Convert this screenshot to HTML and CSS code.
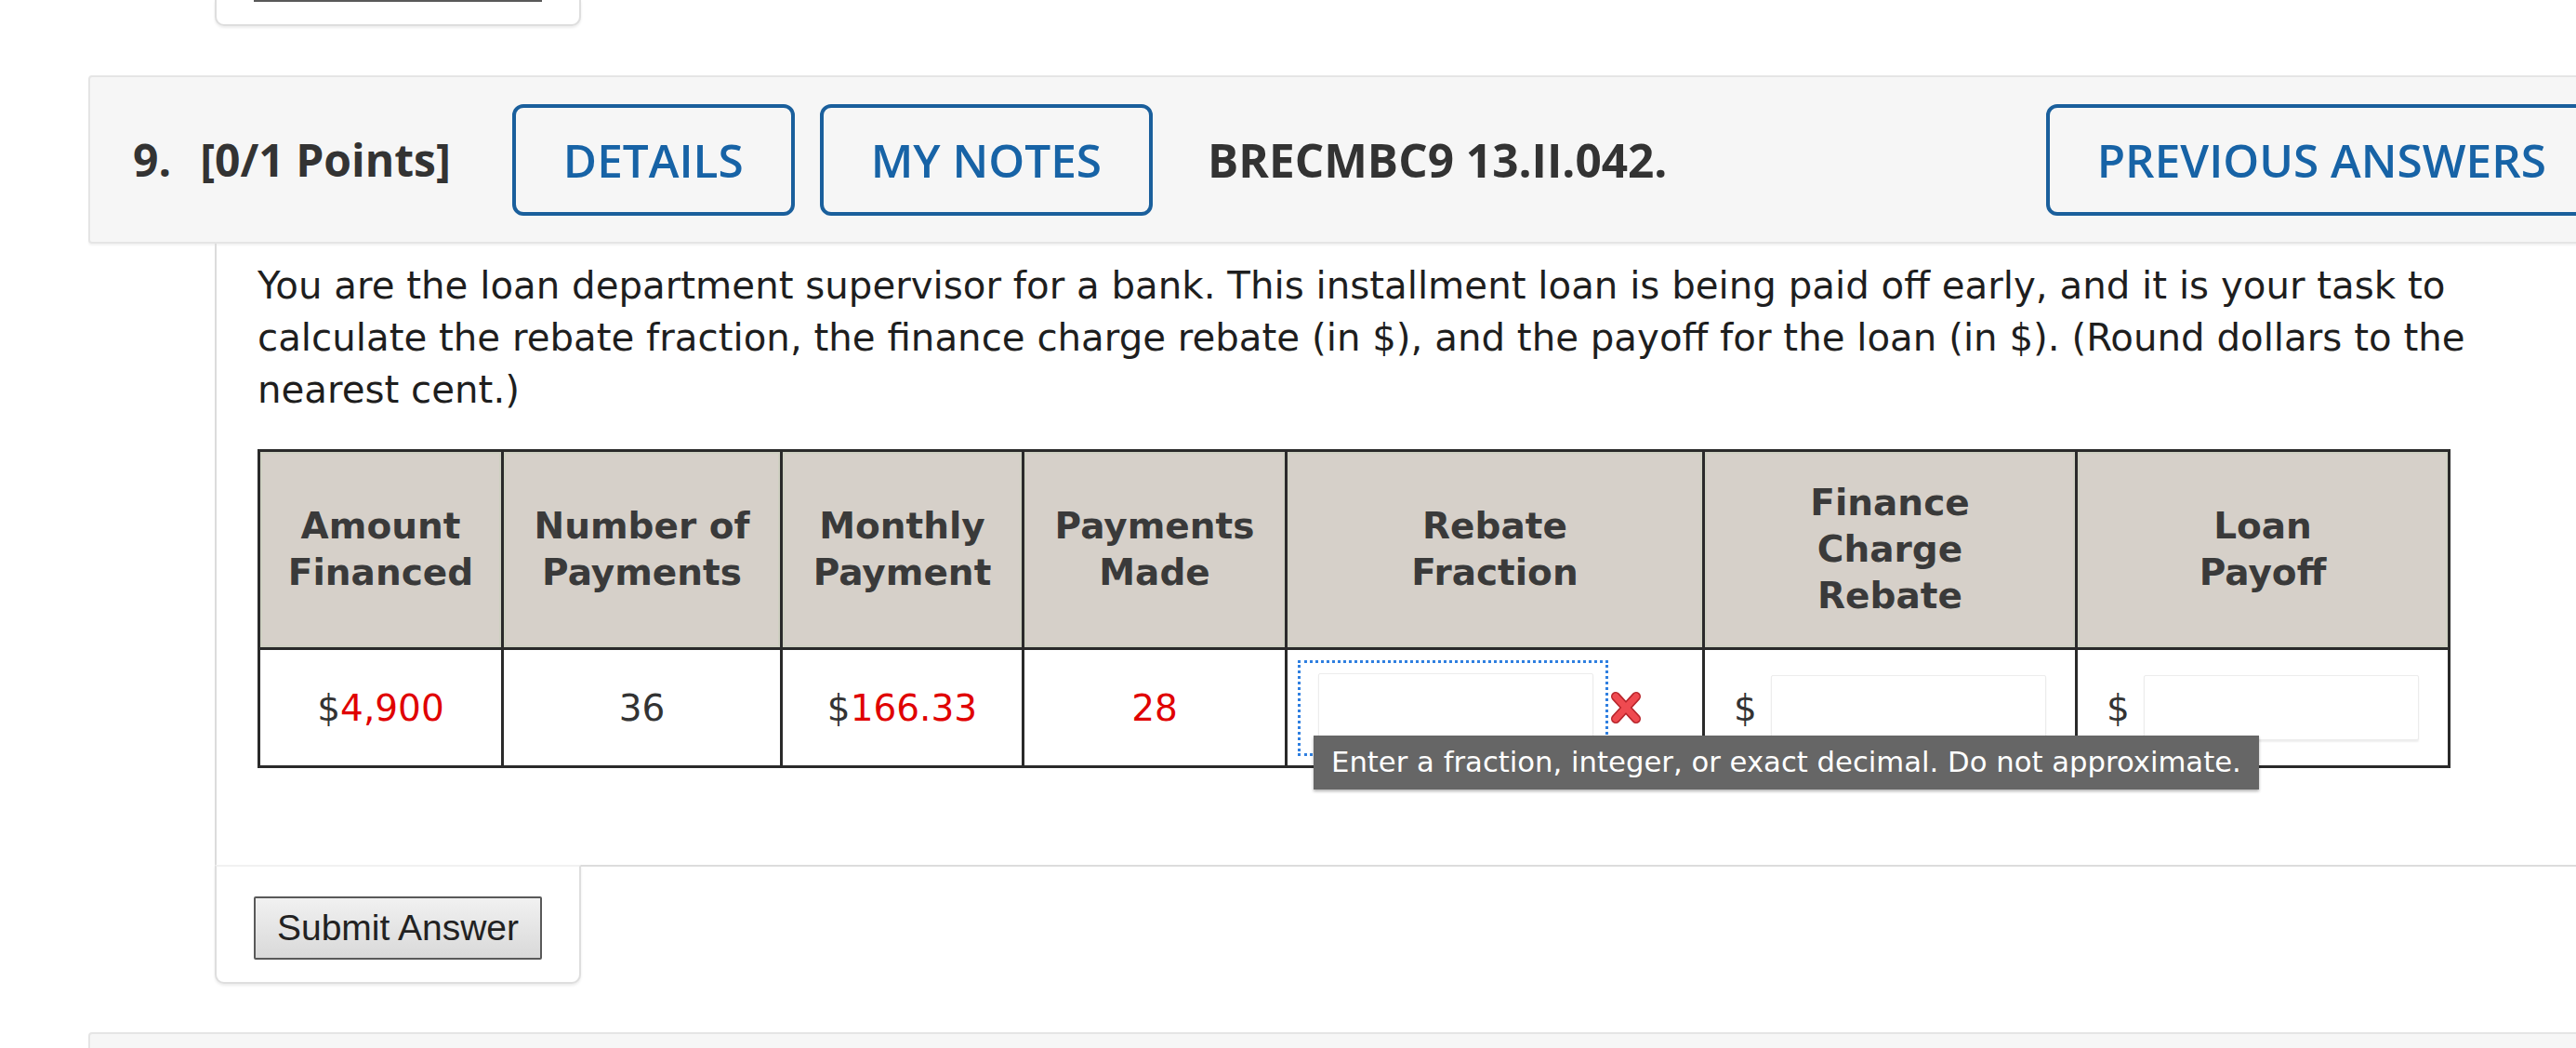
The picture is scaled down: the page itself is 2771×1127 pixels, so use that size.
FILE: index.html
```html
<!DOCTYPE html>
<html lang="en">
<head>
<meta charset="utf-8">
<title>Question 9</title>
<link rel="stylesheet" href="styles.css">
</head>
<body>
<div class="page">
  <div class="question prev">
    <div class="tab tab-prev"><span class="submit-stub"></span></div>
  </div>

  <div class="question current">
    <div class="qhead">
      <span class="qnum">9.</span>
      <span class="qpts">[0/1 Points]</span>
      <a class="qbtn details">DETAILS</a>
      <a class="qbtn notes">MY NOTES</a>
      <span class="qid">BRECMBC9 13.II.042.</span>
      <a class="qbtn prevans">PREVIOUS ANSWERS</a>
    </div>
    <div class="qbody">
      <p class="prompt">You are the loan department supervisor for a bank. This installment loan is being paid off early, and it is your task to calculate the rebate fraction, the finance charge rebate (in $), and the payoff for the loan (in $). (Round dollars to the nearest cent.)</p>
      <table class="loan">
        <colgroup>
          <col class="c-amount">
          <col class="c-number">
          <col class="c-monthly">
          <col class="c-made">
          <col class="c-fraction">
          <col class="c-rebate">
          <col class="c-payoff">
        </colgroup>
        <thead>
          <tr>
            <th>Amount<br>Financed</th>
            <th>Number of<br>Payments</th>
            <th>Monthly<br>Payment</th>
            <th>Payments<br>Made</th>
            <th>Rebate<br>Fraction</th>
            <th>Finance<br>Charge<br>Rebate</th>
            <th>Loan<br>Payoff</th>
          </tr>
        </thead>
        <tbody>
          <tr>
            <td>$<span class="given">4,900</span></td>
            <td>36</td>
            <td>$<span class="given">166.33</span></td>
            <td><span class="given">28</span></td>
            <td class="fraction-cell">
              <div class="answer-row">
                <span class="focus-ring">
                  <input class="answer" type="text" aria-label="Rebate Fraction">
                  <span class="tip">Enter a fraction, integer, or exact decimal. Do not approximate.</span>
                </span>
                <svg class="wrong" width="38" height="40" viewBox="0 0 38 40" aria-hidden="true">
                  <path d="M8 8 L30 32 M30 8 L8 32" stroke="#b8242b" stroke-width="10" stroke-linecap="round"/>
                  <path d="M8 8 L30 32 M30 8 L8 32" stroke="#ef4a50" stroke-width="7" stroke-linecap="round"/>
                </svg>
              </div>
            </td>
            <td>
              <div class="money"><span>$</span><input class="answer" type="text" aria-label="Finance Charge Rebate"></div>
            </td>
            <td>
              <div class="money"><span>$</span><input class="answer" type="text" aria-label="Loan Payoff"></div>
            </td>
          </tr>
        </tbody>
      </table>
    </div>
    <div class="tab"><button class="submit" type="button">Submit Answer</button></div>
  </div>

  <div class="question next">
    <div class="qhead"></div>
  </div>
</div>
</body>
</html>
```

FILE: styles.css
```css
html, body {
  margin: 0;
  padding: 0;
  background: #ffffff;
  overflow: hidden;
}

.page {
  width: 2900px;
}

.question {
  margin-left: 95px;
  width: 2741px;
}

.question.current {
  margin-top: 53px;
}

.question.next {
  margin-top: 52px;
}

/* header bar */
.qhead {
  box-sizing: border-box;
  height: 181px;
  display: flex;
  align-items: center;
  padding: 0 40px 0 46px;
  background: #f6f6f6;
  border: 2px solid #e5e5e5;
  border-radius: 4px;
  box-shadow: 0 2px 2px rgba(0, 0, 0, 0.05);
  font-family: "Open Sans", "Liberation Sans", sans-serif;
  font-size: 48px;
  font-weight: 700;
  color: #333333;
  white-space: nowrap;
}

.qnum {
  margin-right: 31px;
}

.qpts {
  margin-right: 66px;
}

.qid {
  font-size: 49.5px;
}

.qbtn {
  box-sizing: border-box;
  height: 120px;
  display: flex;
  align-items: center;
  padding: 0 51px;
  border: 4px solid #1a5f9c;
  border-radius: 12px;
  color: #1763a6;
  font-weight: 600;
  font-size: 49.5px;
}

.details {
  margin-right: 27px;
}

.notes {
  margin-right: 59px;
}

.prevans {
  margin-left: auto;
}

/* question body */
.qbody {
  margin-left: 136px;
  border-left: 2px solid #dcdcdc;
  border-bottom: 2px solid #dcdcdc;
  padding: 18px 44px 104px;
  font-family: "DejaVu Sans", Verdana, sans-serif;
  color: #1e1e1e;
}

.prompt {
  margin: 0;
  width: 2440px;
  font-size: 40.3px;
  line-height: 56px;
}

/* data table */
.loan {
  margin-top: 35px;
  border-collapse: collapse;
  table-layout: fixed;
  width: 2356px;
  font-size: 39px;
}

.c-amount { width: 262px; }
.c-number { width: 300px; }
.c-monthly { width: 260px; }
.c-made { width: 283px; }
.c-fraction { width: 449px; }
.c-rebate { width: 401px; }
.c-payoff { width: 401px; }

.loan th,
.loan td {
  border: 3px solid #2a2a2a;
  text-align: center;
  vertical-align: middle;
  padding: 0 6px;
}

.loan th {
  height: 210px;
  background: #d6d0c9;
  box-shadow: inset 0 0 0 2px #cfd0c2;
  color: #3a3a3a;
  font-weight: 700;
  line-height: 50px;
}

.loan td {
  height: 124px;
  background: #ffffff;
  color: #333333;
}

.given {
  color: #e00000;
}

.loan td.fraction-cell {
  text-align: left;
  padding-left: 11px;
}

.answer-row {
  display: flex;
  align-items: center;
}

.focus-ring {
  position: relative;
  display: block;
  border: 3px dotted #2f7fe0;
  padding: 11px 13px 16px 19px;
}

.answer {
  display: block;
  box-sizing: border-box;
  width: 296px;
  height: 70px;
  margin: 0;
  border: 1px solid #ececec;
  border-radius: 2px;
  background: #ffffff;
  box-shadow: 0 2px 2px rgba(0, 0, 0, 0.07);
  font: inherit;
}

.wrong {
  display: block;
}

.money {
  display: flex;
  align-items: center;
  justify-content: center;
  gap: 15px;
}

/* tooltip over the table */
.tip {
  position: absolute;
  left: 14px;
  top: 78px;
  z-index: 2;
  height: 58px;
  padding: 0 19px;
  background: #666666;
  color: #ffffff;
  font-size: 30.7px;
  line-height: 58px;
  white-space: nowrap;
  box-shadow: 0 2px 3px rgba(0, 0, 0, 0.3);
}

/* submit tab */
.tab {
  position: relative;
  box-sizing: border-box;
  width: 394px;
  margin-left: 136px;
  margin-top: -2px;
  padding: 32px 40px 24px;
  background: #ffffff;
  border: 2px solid #dedede;
  border-top-color: #f1f1f1;
  border-radius: 0 0 10px 10px;
  box-shadow: 0 2px 3px rgba(0, 0, 0, 0.08);
}

.tab-prev {
  height: 28px;
  margin-top: 0;
  padding: 0 40px 24px;
  border-top: none;
}

.submit-stub {
  display: block;
  box-sizing: border-box;
  width: 310px;
  height: 2px;
  border-bottom: 2px solid #595959;
}

.submit {
  display: block;
  box-sizing: border-box;
  width: 310px;
  height: 68px;
  padding: 0;
  border: 2px solid #595959;
  border-radius: 2px;
  background: linear-gradient(#f1f1f1, #d9d9d9);
  color: #222222;
  font-family: "Liberation Sans", Arial, sans-serif;
  font-size: 39px;
}
```
